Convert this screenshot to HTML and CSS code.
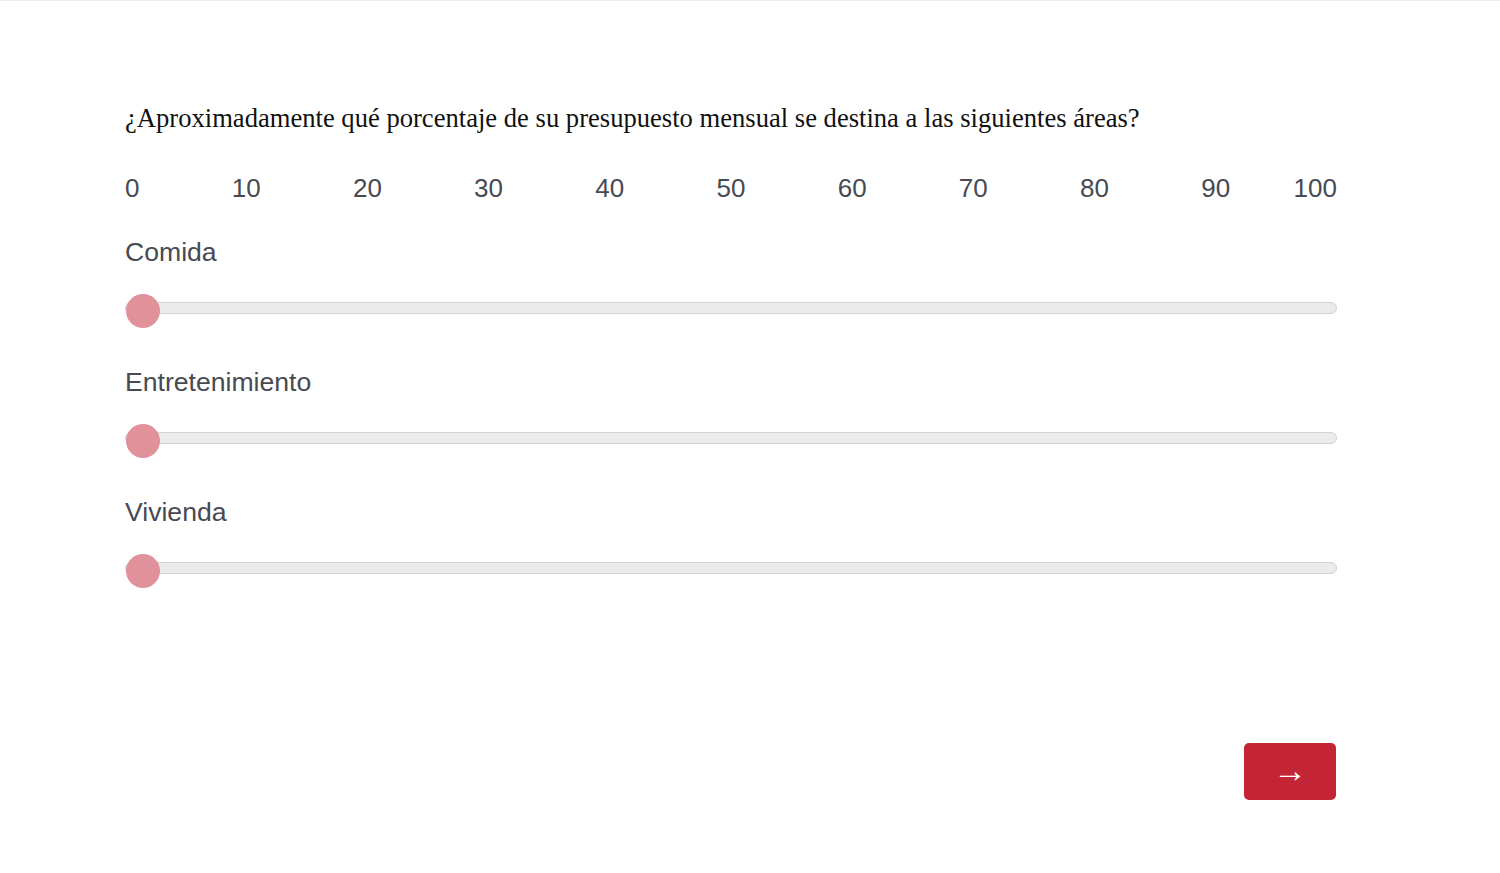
FILE: index.html
```html
<!DOCTYPE html>
<html lang="es">
<head>
    <meta charset="UTF-8">
    <meta name="viewport" content="width=device-width, initial-scale=1.0">
    <title>Encuesta - Presupuesto mensual</title>
    <link rel="stylesheet" href="styles.css">
</head>
<body>
    <div class="survey">
        <p class="question">¿Aproximadamente qué porcentaje de su presupuesto mensual se destina a las siguientes áreas?</p>
        <div class="scale">
            <span>0</span>
            <span>10</span>
            <span>20</span>
            <span>30</span>
            <span>40</span>
            <span>50</span>
            <span>60</span>
            <span>70</span>
            <span>80</span>
            <span>90</span>
            <span>100</span>
        </div>
        <div class="field">
            <label for="comida">Comida</label>
            <input type="range" id="comida" min="0" max="100" value="0">
        </div>
        <div class="field">
            <label for="entretenimiento">Entretenimiento</label>
            <input type="range" id="entretenimiento" min="0" max="100" value="0">
        </div>
        <div class="field">
            <label for="vivienda">Vivienda</label>
            <input type="range" id="vivienda" min="0" max="100" value="0">
        </div>
        <div class="actions">
            <button class="next-btn" type="button">&rarr;</button>
        </div>
    </div>
</body>
</html>
```

FILE: styles.css
```css
body {
    margin: 0;
    border-top: 1px solid #ececec;
    background-color: white;
    font-family: 'Liberation Sans', Arial, sans-serif;
}
.survey {
    width: 1212px;
    padding: 0 0 40px 125px;
}
.question {
    font-family: 'Liberation Serif', 'Times New Roman', serif;
    font-size: 26.6px;
    line-height: 30px;
    color: #111;
    margin: 102px 0 0 0;
}
.scale {
    display: flex;
    justify-content: space-between;
    margin-top: 40px;
    font-size: 26px;
    line-height: 30px;
    color: #474a52;
}
.scale span {
    width: 0;
    display: flex;
    justify-content: center;
    white-space: nowrap;
}
.scale span:first-child {
    justify-content: flex-start;
}
.scale span:last-child {
    justify-content: flex-end;
}
.field {
    display: flex;
    flex-direction: column;
    margin-top: 34px;
}
.field + .field {
    margin-top: 42px;
}
.field label {
    font-size: 26.6px;
    line-height: 30px;
    color: #474a52;
}
.field input[type=range] {
    -webkit-appearance: none;
    appearance: none;
    width: 100%;
    height: 34px;
    margin: 24px 0 0 0;
    background: transparent;
}
.field input[type=range]::-webkit-slider-runnable-track {
    height: 12px;
    background-color: #ebebeb;
    border: 1px solid #d3d3d3;
    border-radius: 7px;
}
.field input[type=range]::-webkit-slider-thumb {
    -webkit-appearance: none;
    width: 34px;
    height: 34px;
    margin-top: -9px;
    border-radius: 50%;
    background-color: #e0919a;
    border: none;
}
.actions {
    display: flex;
    justify-content: flex-end;
    margin-top: 158px;
    padding-right: 1px;
}
.next-btn {
    width: 92px;
    height: 57px;
    padding: 0 0 2px 0;
    border: none;
    border-radius: 5px;
    background-color: #c42536;
    color: white;
    font-size: 34px;
    line-height: 1;
    font-family: 'Liberation Serif', serif;
    cursor: pointer;
}
```
